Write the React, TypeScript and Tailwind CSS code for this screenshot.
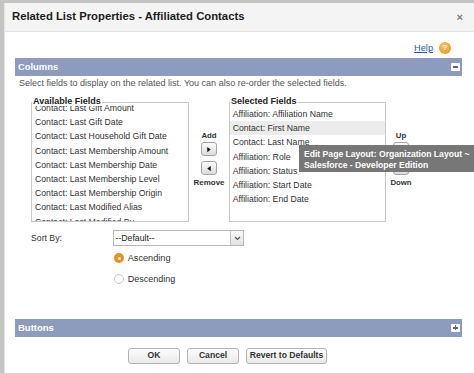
import React from "react";

const available = [
  "Contact: Last Gift Amount",
  "Contact: Last Gift Date",
  "Contact: Last Household Gift Date",
  "Contact: Last Membership Amount",
  "Contact: Last Membership Date",
  "Contact: Last Membership Level",
  "Contact: Last Membership Origin",
  "Contact: Last Modified Alias",
  "Contact: Last Modified By",
];

const selected = [
  "Affiliation: Affiliation Name",
  "Contact: First Name",
  "Contact: Last Name",
  "Affiliation: Role",
  "Affiliation: Status",
  "Affiliation: Start Date",
  "Affiliation: End Date",
];

function ArrowBtn({ dir }: { dir: "left" | "right" | "up" | "down" }) {
  const pts =
    dir === "right"
      ? "6,3.5 10,6.5 6,9.5"
      : dir === "left"
      ? "10,3.5 6,6.5 10,9.5"
      : dir === "up"
      ? "5,8.5 8,4.5 11,8.5"
      : "5,4.5 8,8.5 11,4.5";
  return (
    <div className="w-[16px] h-[14px] rounded-[3px] border border-[#a4a4a4] bg-gradient-to-b from-[#fbfbfb] to-[#dcdcdc] flex items-center justify-center">
      <svg width="16" height="13" viewBox="0 0 16 13">
        <polygon points={pts} fill="#111" />
      </svg>
    </div>
  );
}

function Btn({ label, w }: { label: string; w: string }) {
  return (
    <div
      className={`${w} h-[16px] rounded-[3px] border border-[#b3b3b3] bg-gradient-to-b from-[#fdfdfd] to-[#e9e9e9] flex items-center justify-center text-[8.6px] font-bold text-[#333]`}
    >
      {label}
    </div>
  );
}

export default function App() {
  return (
    <div className="w-[474px] h-[373px] overflow-hidden bg-[#c4c4c4] pt-[3px] pl-[4px] font-['Liberation_Sans',Arial,sans-serif]">
      <div className="h-[370px] bg-white flex flex-col border-l border-[#e6e6e6]">
        {/* Header */}
        <div className="h-[29px] shrink-0 bg-[#f4f4f4] border-b border-[#e2e2e2] flex items-center justify-between pl-[7px] pr-[11px]">
          <span className="text-[11.3px] font-bold text-[#1e1e1e] leading-none">
            Related List Properties - Affiliated Contacts
          </span>
          <span className="text-[11px] text-[#7a7a7a] leading-none font-bold">×</span>
        </div>

        <div className="pl-[10px] pr-[12px] flex flex-col">
          {/* Help row */}
          <div className="pt-[10px] pb-[4px] flex justify-end items-center gap-[6px] pr-[11px]">
            <span className="text-[9.2px] leading-[12px] underline text-[#1d5ea8]">Help</span>
            <span className="w-[12px] h-[12px] rounded-full bg-[radial-gradient(circle_at_40%_35%,#f8c060,#e8901a)] flex items-center justify-center text-[8px] font-bold text-white leading-none">
              ?
            </span>
          </div>

          {/* Columns bar */}
          <div className="h-[18px] bg-[#8d9cbe] flex items-center justify-between pl-[3px] pr-[2px]">
            <span className="text-[9.4px] font-bold text-white leading-none">Columns</span>
            <span className="w-[9px] h-[8px] bg-white rounded-[1px] flex items-center justify-center">
              <span className="w-[5px] h-[1.5px] bg-[#666]" />
            </span>
          </div>

          <div className="mt-[1.5px] pl-[4px] text-[9px] leading-[11px] text-[#555] whitespace-nowrap">
            Select fields to display on the related list. You can also re-order the selected fields.
          </div>

          {/* Fields row */}
          <div className="relative flex mt-[13.5px] pl-[16px] h-[120px]">
            <div className="w-[158px] h-full border border-[#c9c9c9] relative">
              <div className="h-full overflow-hidden">
                <div className="mt-[-2px] pl-[3px]">
                  {available.map((a) => (
                    <div key={a} className="text-[8.7px] leading-[14.2px] text-[#333] whitespace-nowrap">
                      {a}
                    </div>
                  ))}
                </div>
              </div>
              <div className="absolute top-[-7px] left-0 px-[1px] bg-white text-[9px] font-bold leading-[10px] text-[#222]">
                Available Fields
              </div>
            </div>

            <div className="w-[40px] flex flex-col items-center pt-[28.7px]">
              <span className="text-[7.8px] font-bold leading-[10px] text-[#333]">Add</span>
              <div className="mt-[1.6px]">
                <ArrowBtn dir="right" />
              </div>
              <div className="mt-[5px]">
                <ArrowBtn dir="left" />
              </div>
              <span className="mt-[3px] text-[8px] font-bold leading-[10px] text-[#333]">Remove</span>
            </div>

            <div className="w-[157px] h-full border border-[#c9c9c9] relative">
              <div className="pt-[4px]">
                {selected.map((s, i) => (
                  <div
                    key={s}
                    className={`pl-[2.7px] text-[8.7px] leading-[14.2px] text-[#333] whitespace-nowrap ${
                      i === 1 ? "bg-[#ececec]" : ""
                    }`}
                  >
                    {s}
                  </div>
                ))}
              </div>
              <div className="absolute top-[-7px] left-0 px-[1px] bg-white text-[9px] font-bold leading-[10px] text-[#222]">
                Selected Fields
              </div>
            </div>

            <div className="ml-[3px] w-[24px] flex flex-col items-center pt-[28.7px]">
              <span className="text-[7.8px] font-bold leading-[10px] text-[#333]">Up</span>
              <div className="mt-[1.6px]">
                <ArrowBtn dir="up" />
              </div>
              <div className="mt-[5px]">
                <ArrowBtn dir="down" />
              </div>
              <span className="mt-[3px] text-[7.8px] font-bold leading-[10px] text-[#333]">Down</span>
            </div>

            {/* Tooltip */}
            <div className="absolute left-[284px] top-[43px] w-[200px] h-[27px] bg-[#777777] pl-[5px] pt-[4px] text-white text-[8.6px] font-bold leading-[11px] whitespace-nowrap">
              <div>Edit Page Layout: Organization Layout ~</div>
              <div>Salesforce - Developer Edition</div>
            </div>
          </div>

          {/* Sort row */}
          <div className="mt-[8px] flex items-center pl-[16px] h-[16px]">
            <span className="w-[82px] text-[8.7px] text-[#333] leading-none">Sort By:</span>
            <div className="w-[131px] h-[16px] border border-[#b9b9b9] flex bg-white">
              <span className="flex-1 pl-[1.5px] text-[8.7px] leading-[14px] text-[#222]">--Default--</span>
              <span className="w-[13px] h-full border-l border-[#c4c4c4] bg-gradient-to-b from-[#f8f8f8] to-[#e2e2e2] flex items-center justify-center">
                <svg width="7" height="5" viewBox="0 0 7 5">
                  <polyline points="1,1 3.5,3.5 6,1" fill="none" stroke="#555" strokeWidth="1.2" />
                </svg>
              </span>
            </div>
          </div>

          {/* Radios */}
          <div className="mt-[7.3px] pl-[99px] flex items-center h-[10px] gap-[3.7px]">
            <span className="w-[10px] h-[10px] rounded-full bg-[#ef8d25] flex items-center justify-center">
              <span className="w-[3px] h-[3px] rounded-full bg-white" />
            </span>
            <span className="text-[9.2px] text-[#333] leading-none">Ascending</span>
          </div>
          <div className="mt-[11px] pl-[99px] flex items-center h-[10px] gap-[3.7px]">
            <span className="w-[10px] h-[10px] rounded-full bg-white border border-[#c8c8c8]" />
            <span className="text-[9px] text-[#333] leading-none">Descending</span>
          </div>

          {/* Buttons bar */}
          <div className="mt-[35px] h-[17.4px] bg-[#8d9cbe] flex items-center justify-between pl-[3px] pr-[2px]">
            <span className="text-[9.5px] font-bold text-white leading-none">Buttons</span>
            <span className="w-[9px] h-[8px] bg-white rounded-[1px] relative flex items-center justify-center">
              <span className="w-[5px] h-[1.2px] bg-[#666]" />
              <span className="absolute w-[1.2px] h-[5px] bg-[#666]" />
            </span>
          </div>

          <div className="mt-[11px] flex gap-[7px] pl-[113px]">
            <Btn label="OK" w="w-[52px]" />
            <Btn label="Cancel" w="w-[52px]" />
            <Btn label="Revert to Defaults" w="w-[81px]" />
          </div>
        </div>
      </div>
    </div>
  );
}
